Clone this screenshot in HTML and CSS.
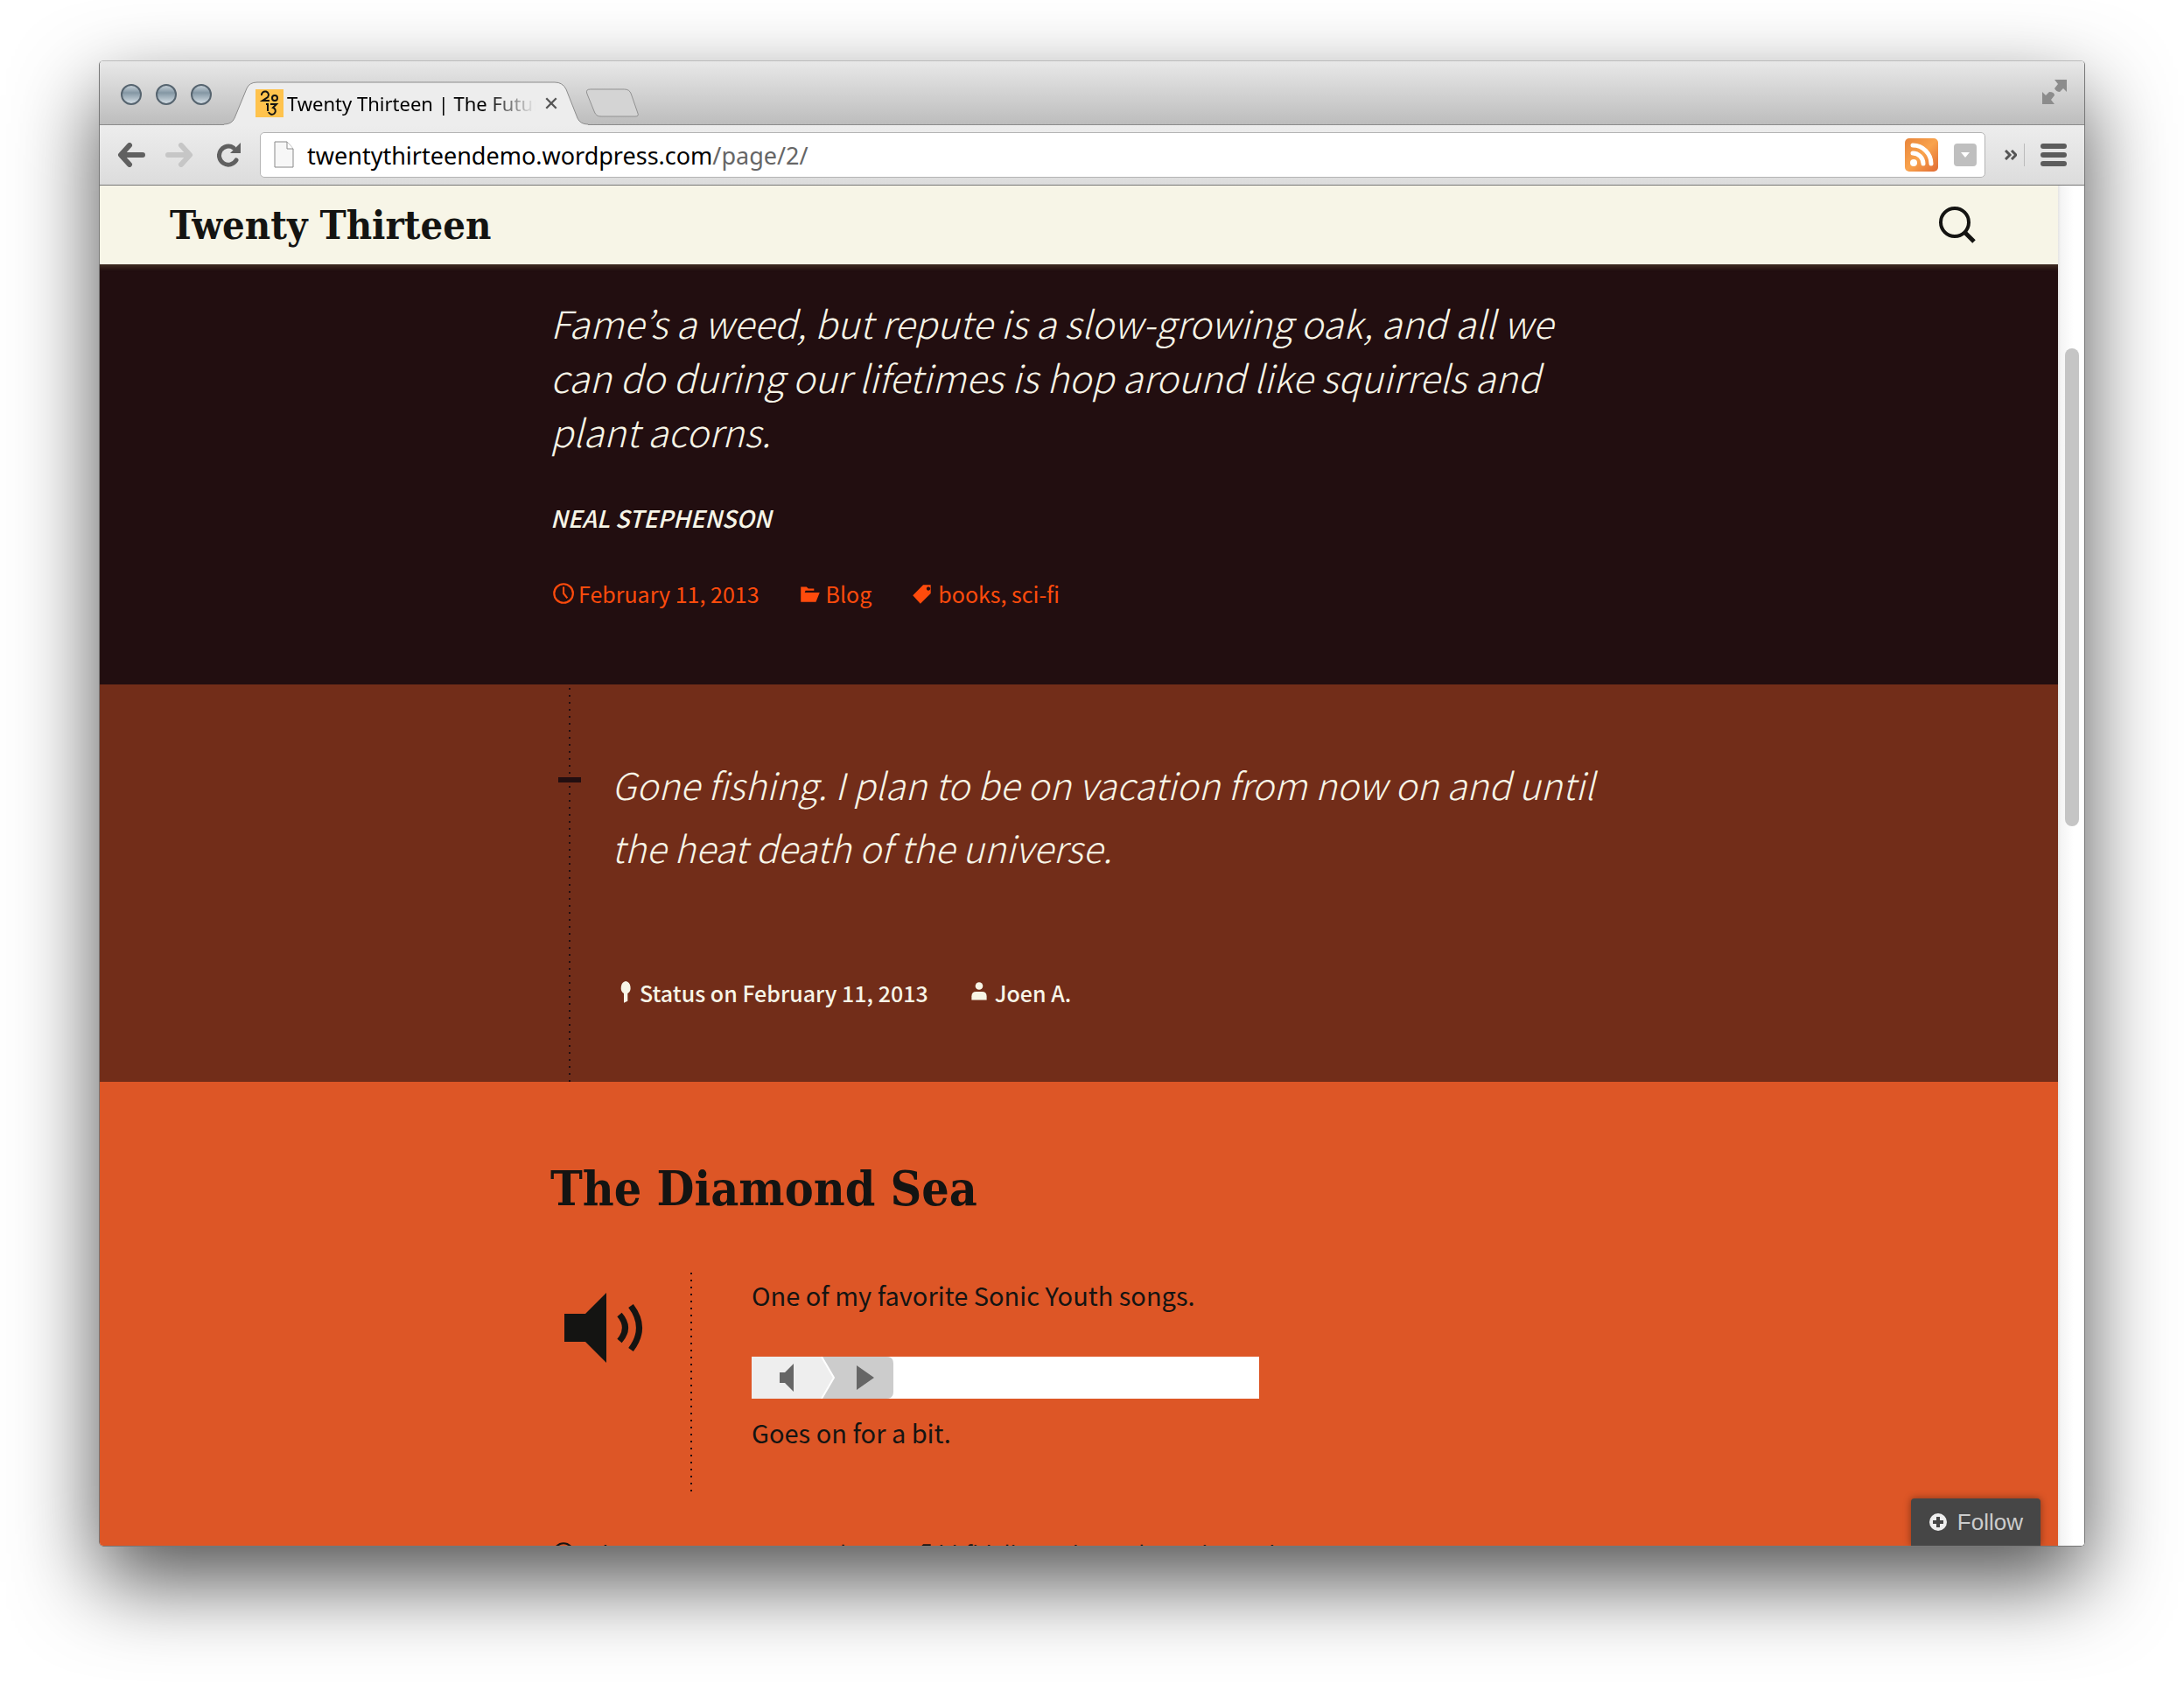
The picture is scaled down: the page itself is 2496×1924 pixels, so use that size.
FILE: index.html
```html
<!DOCTYPE html>
<html lang="en">
<head>
  <meta charset="UTF-8">
  <meta name="viewport" content="width=device-width, initial-scale=1.0">
  <title>Twenty Thirteen | The Future</title>
  <link rel="stylesheet" href="styles.css">
</head>
<body>
  <div class="window">
    <div class="tab-strip">
      <div class="lights">
        <button class="light" aria-label="Close window"></button>
        <button class="light" aria-label="Minimize window"></button>
        <button class="light" aria-label="Zoom window"></button>
      </div>
      <div class="tab">
        <svg class="tab-shape" viewBox="0 0 416 50" aria-hidden="true">
          <path d="M0 49 Q9 49 12 42 L26 8 Q29 1 38 1 L378 1 Q387 1 391 9 L404 42 Q407 49 416 49 V50 H0 Z" fill="#ededed"/>
          <path d="M0 49 Q9 49 12 42 L26 8 Q29 1 38 1 L378 1 Q387 1 391 9 L404 42 Q407 49 416 49" fill="none" stroke="#8c8c8c"/>
        </svg>
        <svg class="favicon" viewBox="0 0 32 32" aria-hidden="true">
          <rect width="32" height="32" fill="#ffc34d"/>
          <g fill="none" stroke="#141412" stroke-width="2">
            <path d="M7 7 A4 4 0 1 1 14 9 L8 13 H16"/>
            <circle cx="22" cy="10" r="3"/>
            <path d="M12 17 H14 V25 M17 17 H24 L20 21 A4 4 0 1 1 15 26"/>
          </g>
        </svg>
        <span class="tab-title">Twenty Thirteen | The Future</span>
        <button class="tab-close" aria-label="Close tab">
          <svg viewBox="0 0 14 14"><path d="M2 2 L12 12 M12 2 L2 12" stroke="#555" stroke-width="2"/></svg>
        </button>
      </div>
      <button class="new-tab" aria-label="New tab">
        <svg viewBox="0 0 66 34"><path d="M7 1 H48 Q54 1 56 6 L64 28 Q66 32 61 32 H20 Q14 32 12 27 L3 6 Q1 1 7 1 Z" transform="translate(2 0) scale(.95 1)" fill="#d4d4d4" stroke="#8f8f8f"/></svg>
      </button>
      <button class="fullscreen" aria-label="Full screen">
        <svg viewBox="0 0 28 28"><path d="M14 0 H28 V14 L24 10 L20 14 Q16 14 14 10 L18 5 Z M0 14 L4 18 L8 14 Q14 14 14 18 L10 23 L14 28 H0 Z" fill="#8c8c8c"/></svg>
      </button>
    </div>

    <div class="toolbar">
      <button class="nav-btn" aria-label="Back">
        <svg viewBox="0 0 32 28"><path d="M29 14 H5 M14 3 L4 14 L14 25" fill="none" stroke="#606060" stroke-width="6" stroke-linecap="round" stroke-linejoin="round"/></svg>
      </button>
      <button class="nav-btn" aria-label="Forward">
        <svg viewBox="0 0 32 28"><path d="M3 14 H27 M18 3 L28 14 L18 25" fill="none" stroke="#c6c6c6" stroke-width="6" stroke-linecap="round" stroke-linejoin="round"/></svg>
      </button>
      <button class="nav-btn reload" aria-label="Reload">
        <svg viewBox="0 0 28 28"><path d="M22 20 A10.500 10.500 0 1 1 19 6" fill="none" stroke="#606060" stroke-width="5" stroke-linecap="round"/><path d="M27 0 V12 H15 Z" fill="#606060"/></svg>
      </button>
      <div class="address">
        <svg class="page-icon" viewBox="0 0 24 32" aria-hidden="true"><path d="M1 1 H15 L22 9 V30 H1 Z" fill="#f7f7f7" stroke="#8a8a8a"/><path d="M15 1 V9 H22" fill="#fff" stroke="#8a8a8a"/></svg>
        <span class="url"><b>twentythirteendemo.wordpress.com</b>/page/2/</span>
        <svg class="feed" viewBox="0 0 38 38" aria-hidden="true">
          <defs><linearGradient id="feedFill" x1="0" y1="0" x2="1" y2="1"><stop offset="0" stop-color="#e8853b"/><stop offset=".5" stop-color="#f9a34d"/><stop offset="1" stop-color="#e06b34"/></linearGradient></defs>
          <rect width="38" height="38" rx="5" fill="url(#feedFill)"/>
          <circle cx="10" cy="28" r="4" fill="#fff"/>
          <path d="M9 17 A12 12 0 0 1 21 29 M9 8 A21 21 0 0 1 30 29" fill="none" stroke="#fff" stroke-width="5" stroke-linecap="round"/>
        </svg>
        <button class="drop" aria-label="Page options"><svg viewBox="0 0 26 26"><path d="M8 10 H18 L13 16 Z" fill="#fff"/></svg></button>
      </div>
      <button class="more" aria-label="More extensions">
        <svg viewBox="0 0 14 12"><path d="M1 1 L6 6 L1 11 M8 1 L13 6 L8 11" fill="none" stroke="#555" stroke-width="3"/></svg>
      </button>
      <button class="menu" aria-label="Menu"><span></span><span></span><span></span></button>
    </div>

    <div class="viewport">
      <div class="page">
        <header class="site-header">
          <a class="site-title" href="#">Twenty Thirteen</a>
          <button class="search" aria-label="Search">
            <svg viewBox="0 0 42 42"><circle cx="18" cy="18" r="16" fill="none" stroke="#141412" stroke-width="4"/><path d="M29 29 L40 40" stroke="#141412" stroke-width="5"/></svg>
          </button>
        </header>

        <article class="post post-quote">
          <div class="inner">
            <blockquote class="quote">
              <p>Fame’s a weed, but repute is a slow-growing oak, and all we can do during our lifetimes is hop around like squirrels and plant acorns.</p>
              <cite>Neal Stephenson</cite>
            </blockquote>
            <div class="meta">
              <a href="#"><svg viewBox="0 0 26 26"><circle cx="14" cy="13" r="10" fill="none" stroke="currentColor" stroke-width="2"/><path d="M14 6 V13 L18 18" fill="none" stroke="currentColor" stroke-width="2"/></svg>February 11, 2013</a>
              <a href="#"><svg viewBox="0 0 26 26"><path d="M3 6 H9 L11 8 H17 V10 H8 L4 19 L7 12 H23 L19 22 H3 Z" fill="currentColor"/></svg>Blog</a>
              <a href="#"><svg viewBox="0 0 26 26"><path d="M14 4 H22 V13 L11 24 L3 15 Z M19 6 a2 2 0 1 0 1 0 Z" fill="currentColor" fill-rule="evenodd"/></svg>books, sci-fi</a>
            </div>
          </div>
        </article>

        <article class="post post-status">
          <div class="inner">
            <div class="status-body">
              <p class="status-text">Gone fishing. I plan to be on vacation from now on and until the heat death of the universe.</p>
              <div class="meta">
                <a href="#"><svg viewBox="0 0 26 26"><path d="M15 1 a6 7 0 0 1 2 13 V22 L13 24 V14 A6 7 0 0 1 15 1 Z" fill="currentColor"/></svg>Status on February 11, 2013</a>
                <a href="#"><svg viewBox="0 0 26 26"><circle cx="13" cy="6" r="4" fill="currentColor"/><path d="M5 21 V17 Q5 12 10 12 H16 Q21 12 21 17 V21 Z" fill="currentColor"/></svg>Joen A.</a>
              </div>
            </div>
          </div>
        </article>

        <article class="post post-audio">
          <div class="inner">
            <h1>The Diamond Sea</h1>
            <div class="audio">
              <svg class="speaker" viewBox="0 0 90 80" aria-hidden="true">
                <path d="M0 24 H24 L48 0 V80 L24 56 H0 Z" fill="#141412"/>
                <path d="M63 25 Q76 40 63 55 M76 15 Q95 40 76 65" fill="none" stroke="#141412" stroke-width="7"/>
              </svg>
              <div class="audio-content">
                <p>One of my favorite Sonic Youth songs.</p>
                <div class="player">
                  <svg viewBox="0 0 162 48" aria-hidden="true">
                    <path d="M0 0 H80 L94 24 L80 48 H0 Z" fill="#eee"/>
                    <path d="M80 0 H154 Q162 0 162 8 V40 Q162 48 154 48 H80 L94 24 Z" fill="#ccc"/>
                    <path d="M80 0 L94 24 L80 48" fill="none" stroke="#fff" stroke-width="2"/>
                    <path d="M32 18 H38 L48 8 V40 L38 30 H32 Z M120 10 L140 24 L120 38 Z" fill="#666"/>
                  </svg>
                </div>
                <p>Goes on for a bit.</p>
              </div>
            </div>
            <div class="meta">
              <a href="#"><svg viewBox="0 0 26 26"><circle cx="14" cy="13" r="10" fill="none" stroke="currentColor" stroke-width="2"/></svg>February 11, 2013</a>
              <a href="#"><svg viewBox="0 0 26 26"><path d="M3 6 H9 L11 8 H17 V10 H8 L4 19 L7 12 H23 L19 22 H3 Z" fill="currentColor"/></svg>Blog</a>
              <a href="#"><svg viewBox="0 0 26 26"><path d="M14 4 H22 V13 L11 24 L3 15 Z" fill="currentColor"/></svg>hi-fidelity, noise rock, Sonic Youth</a>
            </div>
          </div>
        </article>
        <button class="follow">
          <svg viewBox="0 0 22 22"><circle cx="11" cy="11" r="10" fill="#eee"/><path d="M11 5 V17 M5 11 H17" stroke="#464646" stroke-width="4"/></svg>Follow
        </button>
      </div>
      <div class="scrollbar"><div class="thumb"></div></div>
    </div>
  </div>
</body>
</html>
```
FILE: styles.css
```css
* {
  box-sizing: border-box;
}
body {
  margin: 0;
  height: 100vh;
  padding: 69px 113px 157px;
  background: #fff;
  font-family: "Noto Sans CJK JP", "Noto Sans", sans-serif;
  color: #141412;
}
button {
  margin: 0;
  padding: 0;
  border: 0;
  background: none;
}
a {
  color: inherit;
  text-decoration: none;
}
p {
  margin: 0;
}
svg {
  display: block;
  flex: none;
}

/* browser window */
.window {
  display: flex;
  flex-direction: column;
  height: 100%;
  border: 1px solid #777;
  border-top-color: #bbb;
  border-radius: 5px;
  overflow: hidden;
  box-shadow: 0 40px 96px rgba(0, 0, 0, 0.68);
}
.tab-strip {
  display: flex;
  flex: none;
  align-items: flex-end;
  height: 73px;
  padding-left: 24px;
  background: linear-gradient(#e8e8e8, #bdbdbd);
  border-bottom: 1px solid #8c8c8c;
}
.lights {
  display: flex;
  gap: 16px;
  padding-bottom: 22px;
}
.light {
  width: 24px;
  height: 24px;
  border: 2px solid #56646f;
  border-radius: 50%;
  background: linear-gradient(#c3ced6, #8497a4 40%, #d3dde4);
}
.tab {
  position: relative;
  display: flex;
  align-items: center;
  width: 416px;
  height: 50px;
  margin: 0 0 -1px 14px;
  padding-left: 36px;
}
.tab-shape {
  position: absolute;
  left: 0;
  top: 0;
  width: 416px;
  height: 50px;
}
.favicon {
  position: relative;
  width: 32px;
  height: 32px;
}
.tab-title {
  position: relative;
  width: 284px;
  margin-left: 4px;
  overflow: hidden;
  white-space: nowrap;
  font: 22px "Noto Sans", sans-serif;
  color: #000;
  -webkit-mask-image: linear-gradient(to right, #000 80%, transparent);
  mask-image: linear-gradient(to right, #000 80%, transparent);
}
.tab-close {
  position: relative;
  width: 16px;
  margin-left: 10px;
}
.new-tab {
  width: 66px;
  margin-left: -6px;
  padding-bottom: 7px;
}
.fullscreen {
  width: 28px;
  margin-left: auto;
  margin-right: 20px;
  padding-bottom: 23px;
}
.toolbar {
  display: flex;
  flex: none;
  align-items: center;
  height: 69px;
  padding: 0 20px;
  background: linear-gradient(#ededed, #dcdcdc);
  border-bottom: 1px solid #777;
}
.nav-btn {
  width: 32px;
  margin-right: 23px;
}
.nav-btn.reload {
  width: 28px;
  margin-right: 21px;
  margin-left: 4px;
}
.address {
  display: flex;
  flex: 1;
  align-items: center;
  height: 52px;
  padding: 0 9px 0 15px;
  border: 1px solid #b4b4b4;
  border-radius: 5px;
  background: #fff;
}
.page-icon {
  width: 24px;
  height: 32px;
}
.url {
  flex: 1;
  margin-left: 14px;
  font: 27px "Noto Sans", sans-serif;
  color: #666;
}
.url b {
  font-weight: 400;
  color: #000;
}
.feed {
  width: 38px;
  height: 38px;
  margin-right: 18px;
}
.drop {
  width: 26px;
  height: 26px;
  border-radius: 4px;
  background: #bfbfbf;
}
.more {
  width: 14px;
  margin: 0 8px 0 22px;
}
.menu {
  display: flex;
  flex-direction: column;
  gap: 4px;
  padding-left: 18px;
  border-left: 1px solid #bbb;
}
.menu span {
  width: 30px;
  height: 6px;
  border-radius: 3px;
  background: #5c5c5c;
}

/* web page */
.viewport {
  display: flex;
  flex: 1;
  min-height: 0;
}
.page {
  position: relative;
  flex: 1;
  overflow: hidden;
}
.scrollbar {
  width: 30px;
  padding: 186px 6px 0 8px;
  background: linear-gradient(to right, #e4e4e4, #f4f4f4 10%, #fff 60%);
}
.thumb {
  height: 546px;
  border-radius: 8px;
  background: #c5c5c5;
}
.site-header {
  display: flex;
  justify-content: space-between;
  align-items: center;
  height: 90px;
  padding: 0 94px 0 80px;
  background: #f7f5e7;
}
.site-title {
  font: bold 45px "DejaVu Serif Condensed", "DejaVu Serif", serif;
}
.search {
  width: 42px;
}
.inner {
  max-width: 1208px;
  margin: 0 auto;
}
.quote,
.status-text {
  font-style: italic;
  font-weight: 300;
}
.post-quote {
  height: 480px;
  padding-top: 35px;
  background: #220e10;
  box-shadow: inset 0 6px 4px -2px #3d2a20;
  color: #f7f5e7;
}
.quote {
  margin: 0 0 42px;
  font-size: 43px;
  line-height: 62px;
}
.quote cite {
  display: block;
  margin-top: 45px;
  font-size: 27px;
  font-weight: 500;
  line-height: 48px;
  text-transform: uppercase;
}
.meta {
  display: flex;
  gap: 44px;
  font-size: 25px;
  line-height: 40px;
}
.meta a {
  display: flex;
  align-items: center;
  gap: 4px;
}
.meta svg {
  width: 28px;
  height: 28px;
}
.post-quote .meta {
  color: #ff4b0c;
}
.post-status {
  height: 454px;
  background: #722d19;
  color: #f7f5e7;
}
.post-status .inner {
  height: 100%;
  padding-left: 21px;
}
.status-body {
  position: relative;
  height: 100%;
  padding: 78px 0 0 49px;
  background: repeating-linear-gradient(transparent 0 4px, #220e10 4px 6px, transparent 6px 8px) left / 2px 100% no-repeat;
}
.status-body::before {
  content: "";
  position: absolute;
  left: -12px;
  top: 106px;
  width: 26px;
  height: 6px;
  background: #220e10;
}
.status-text {
  margin-bottom: 110px;
  font-size: 42px;
  line-height: 72px;
}
.post-status .meta {
  font-weight: 500;
}
.post-audio {
  padding-top: 82px;
  background: #dd5626;
}
.post-audio h1 {
  margin: 0 0 56px;
  font: bold 55px/80px "DejaVu Serif Condensed", "DejaVu Serif", serif;
}
.audio {
  display: flex;
  height: 252px;
  margin-bottom: 48px;
}
.speaker {
  width: 90px;
  height: 80px;
  margin: 23px 54px 0 16px;
}
.audio-content {
  flex: 1;
  padding-left: 70px;
  background: repeating-linear-gradient(#220e10 0 2px, transparent 2px 8px) left / 2px 100% no-repeat;
  font-size: 29px;
  line-height: 50px;
}
.player {
  width: 580px;
  height: 48px;
  margin: 46px 0 13px;
  background: #fff;
}
.player svg {
  width: 162px;
  height: 48px;
}
.follow {
  position: absolute;
  right: 20px;
  bottom: 0;
  display: flex;
  align-items: center;
  gap: 11px;
  height: 54px;
  padding: 0 20px;
  border-radius: 4px 4px 0 0;
  background: #464646;
  box-shadow: 0 0 8px rgba(0, 0, 0, 0.4);
  font: 26px "Liberation Sans", sans-serif;
  color: #ccc;
}
.follow svg {
  width: 22px;
  height: 22px;
}
```
